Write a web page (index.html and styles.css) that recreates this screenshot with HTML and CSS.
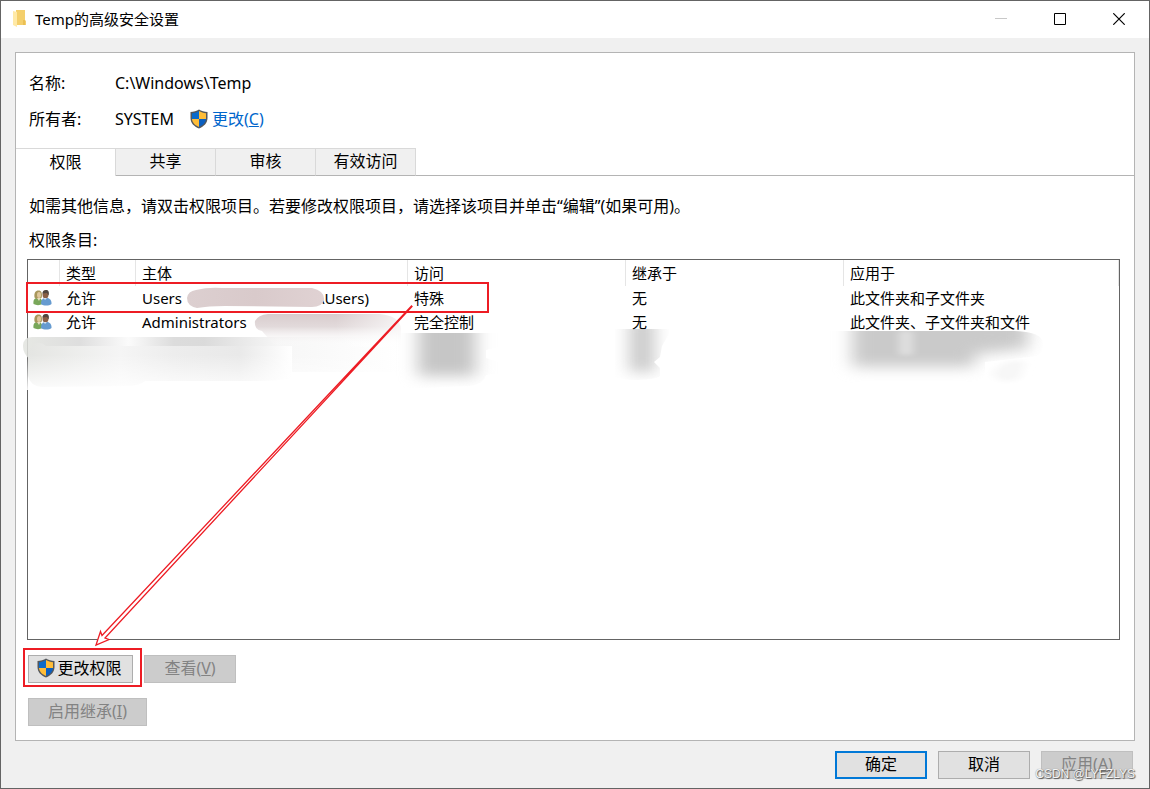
FILE: index.html
```html
<!DOCTYPE html>
<html lang="zh-CN">
  <head>
    <meta charset="UTF-8" />
    <meta name="viewport" content="width=device-width, initial-scale=1.0" />
    <title>Temp的高级安全设置</title>
    <link rel="stylesheet" href="styles.css">
  </head>
  <body>
    <!-- shared icons -->
    <svg class="defs" width="0" height="0" aria-hidden="true">
      <symbol id="shield" viewBox="0 0 18 20">
        <path d="M9 0.500C6.800 2 3.500 3 0.500 3V9C0.500 14 4 17.500 9 19.500C14 17.500 17.500 14 17.500 9V3C14.500 3 11.200 2 9 0.500Z" fill="#55585c"/>
        <path d="M9 2V10H2V4.200C4.500 4 7 3.200 9 2Z" fill="#0b6bcb"/>
        <path d="M9 2V10H16V4.200C13.500 4 11 3.200 9 2Z" fill="#ffbd38"/>
        <path d="M9 10V18C5 16.300 2.200 13.500 2 10Z" fill="#ffbd38"/>
        <path d="M9 10V18C13 16.300 15.800 13.500 16 10Z" fill="#0b5fc0"/>
      </symbol>
      <symbol id="people" viewBox="0 0 19 16">
        <path d="M0.500 14C0 10 1.500 8 4.500 7.800C8 8 9.500 10 9.500 14C7 15.500 3 15.500 0.500 14Z" fill="#79a75a"/>
        <path d="M1.500 7.500C0.800 3 2.500 0.500 5.500 0.500C8.500 0.500 9.300 3 8.800 7.500L6.500 9H3.500Z" fill="#a8975c"/>
        <ellipse cx="6" cy="5" rx="2" ry="3" fill="#dfc69c"/>
        <path d="M4 8L6 11L7.500 8Z" fill="#e6dcc0"/>
        <path d="M8 14C8 10 9.500 8 13 7.800C17 8 18.700 10.500 18.500 14C16 16 10.500 16 8 14Z" fill="#669bd0"/>
        <ellipse cx="12.500" cy="4.600" rx="3" ry="4" fill="#8a6046"/>
        <path d="M9.500 3.500C9.500 1 11 0 13 0C15.500 0 16.500 2 15.500 5.500L14 3Z" fill="#51463f"/>
        <path d="M10.500 8L12 10L14 8Z" fill="#d5e2ef"/>
      </symbol>
    </svg>

    <div class="window">
      <header class="titlebar">
        <svg class="folder" viewBox="0 0 13 17" aria-hidden="true">
          <path d="M3 0H12V10L13 11V15H3Z" fill="#f4cf6c"/>
          <path d="M0 1L4 2V17L0 15Z" fill="#ffe9a6"/>
          <path d="M10 10H12V15H10Z" fill="#eabf54"/>
        </svg>
        <h1>Temp的高级安全设置</h1>
        <div class="controls">
          <button type="button" aria-label="最小化" disabled>
            <svg viewBox="0 0 12 12"><path d="M0 5.500H12" stroke="#c8c8c8"/></svg>
          </button>
          <button type="button" aria-label="最大化">
            <svg viewBox="0 0 12 12"><path d="M0.500 0.500H11.500V11.500H0.500Z" fill="none" stroke="#000"/></svg>
          </button>
          <button type="button" aria-label="关闭">
            <svg viewBox="0 0 12 12"><path d="M0.300 0.300L11.700 11.700M11.700 0.300L0.300 11.700" stroke="#000" stroke-width="1.200"/></svg>
          </button>
        </div>
      </header>

      <main class="panel">
        <dl class="info">
          <dt>名称:</dt>
          <dd>C:\Windows\Temp</dd>
          <dt>所有者:</dt>
          <dd>
            SYSTEM
            <a href="#owner"><svg class="shield"><use href="#shield"/></svg>更改(<u>C</u>)</a>
          </dd>
        </dl>

        <nav class="tabs" role="tablist">
          <button type="button" role="tab" class="tab active" aria-selected="true">权限</button>
          <button type="button" role="tab" class="tab">共享</button>
          <button type="button" role="tab" class="tab">审核</button>
          <button type="button" role="tab" class="tab">有效访问</button>
        </nav>

        <section class="content">
          <p>如需其他信息，请双击权限项目。若要修改权限项目，请选择该项目并单击“编辑”(如果可用)。</p>
          <p id="entriesLabel">权限条目:</p>

          <div class="list">
            <table aria-labelledby="entriesLabel">
              <colgroup>
                <col class="col-icon">
                <col class="col-type">
                <col class="col-principal">
                <col class="col-access">
                <col class="col-inherit">
                <col>
              </colgroup>
              <thead>
                <tr>
                  <th></th>
                  <th>类型</th>
                  <th>主体</th>
                  <th>访问</th>
                  <th>继承于</th>
                  <th>应用于</th>
                </tr>
              </thead>
              <tbody>
                <tr>
                  <td><svg class="people"><use href="#people"/></svg></td>
                  <td>允许</td>
                  <td>Users <span class="hidden-name"></span>\Users)</td>
                  <td>特殊</td>
                  <td>无</td>
                  <td>此文件夹和子文件夹</td>
                </tr>
                <tr>
                  <td><svg class="people"><use href="#people"/></svg></td>
                  <td>允许</td>
                  <td>Administrators</td>
                  <td>完全控制</td>
                  <td>无</td>
                  <td>此文件夹、子文件夹和文件</td>
                </tr>
              </tbody>
            </table>
          </div>

          <div class="actions">
            <button type="button" class="btn change"><svg class="shield"><use href="#shield"/></svg>更改权限</button>
            <button type="button" class="btn view" disabled>查看(<u>V</u>)</button>
          </div>
          <div class="actions">
            <button type="button" class="btn inherit" disabled>启用继承(<u>I</u>)</button>
          </div>
        </section>
      </main>

      <footer class="footer">
        <button type="button" class="btn default">确定</button>
        <button type="button" class="btn">取消</button>
        <button type="button" class="btn" disabled>应用(<u>A</u>)</button>
      </footer>

      <!-- masked names, red boxes and arrow drawn over the dialog -->
      <svg class="marks" viewBox="0 0 1150 789" aria-hidden="true">
        <defs>
          <linearGradient id="pink">
            <stop offset="0" stop-color="#dccfd0"/>
            <stop offset="0.500" stop-color="#d9cacb"/>
            <stop offset="1" stop-color="#e0d2d3"/>
          </linearGradient>
          <linearGradient id="pinkFade" x2="0" y2="1">
            <stop offset="0" stop-color="#d8cccd"/>
            <stop offset="0.400" stop-color="#e2dadb"/>
            <stop offset="1" stop-color="#fff" stop-opacity="0"/>
          </linearGradient>
          <linearGradient id="pinkEnd">
            <stop offset="0.550" stop-color="#fff" stop-opacity="0"/>
            <stop offset="1" stop-color="#fff" stop-opacity="0.750"/>
          </linearGradient>
          <linearGradient id="strip">
            <stop offset="0" stop-color="#e2e4df"/>
            <stop offset="0.150" stop-color="#d8d8d8"/>
            <stop offset="0.280" stop-color="#fafafa"/>
            <stop offset="0.400" stop-color="#d6d6d6"/>
            <stop offset="0.480" stop-color="#d4d4d4"/>
            <stop offset="0.680" stop-color="#f5f5f5"/>
            <stop offset="1" stop-color="#fff"/>
          </linearGradient>
          <linearGradient id="greyLeft">
            <stop offset="0" stop-color="#e4e5e2"/>
            <stop offset="0.350" stop-color="#f5f5f5"/>
            <stop offset="0.550" stop-color="#ededed"/>
            <stop offset="0.800" stop-color="#e9e9e9"/>
            <stop offset="1" stop-color="#fff"/>
          </linearGradient>
          <linearGradient id="down" x2="0" y2="1">
            <stop offset="0.200" stop-color="#fff" stop-opacity="0"/>
            <stop offset="1" stop-color="#fff" stop-opacity="0.900"/>
          </linearGradient>
          <filter id="blur" x="-60%" y="-60%" width="220%" height="220%" color-interpolation-filters="sRGB"><feGaussianBlur stdDeviation="9 7"/></filter>
          <filter id="soft" x="-60%" y="-60%" width="220%" height="220%"><feGaussianBlur stdDeviation="5 2"/></filter>
          <clipPath id="clipAccess"><path d="M390 333H500V347L486 350V358L498 362V374L486 375Q484 384 470 386L440 387Q420 389 390 388Z"/></clipPath>
          <clipPath id="clipInherit"><path d="M600 329H672L662 346L660 357L654 362L660 368V376Q655 380 630 380L600 374Z"/></clipPath>
          <clipPath id="clipApply"><path d="M815 331H1015Q1042 332 1043 343Q1043 354 1037 356L985 362V372Q984 383 960 383L845 384L815 376Z"/></clipPath>
        </defs>

        <path d="M32 337H400V372H50Q22 360 23 345Q24 337 32 337Z" fill="url(#strip)" opacity="0.850"/>
        <path d="M28 352Q36 337 46 346H292V378Q280 381 250 381H145Q140 386 125 386L42 387Q30 386 28 376Z" fill="url(#greyLeft)"/>
        <path d="M23 346H402V390H23Z" fill="url(#down)"/>

        <path d="M196 290Q208 287 222 288L312 288Q325 291 324 300Q322 307 312 307L225 306Q208 306 197 308Q187 306 187 298Q188 291 196 290Z" fill="url(#pink)"/>
        <path d="M268 314H380Q400 316 401 329V346H275L262 331Q254 330 255 321Q258 315 268 314Z" fill="url(#pinkFade)"/>
        <path d="M255 313H402V347H255Z" fill="url(#pinkEnd)"/>

        <g clip-path="url(#clipAccess)"><rect x="418" y="318" width="58" height="58" fill="#c6c6c6" filter="url(#blur)"/></g>
        <g clip-path="url(#clipInherit)"><rect x="630" y="318" width="24" height="54" fill="#c8c8c8" filter="url(#blur)"/></g>
        <g clip-path="url(#clipApply)">
          <path d="M852 318H1028V349L975 354V367H852Z" fill="#cacaca" filter="url(#blur)"/>
          <rect x="899" y="331" width="14" height="24" fill="#fff" opacity="0.400" filter="url(#soft)"/>
        </g>
        <path d="M992 374Q1004 356 1026 362L1020 378Q1000 386 992 374Z" fill="#f7f7f7" filter="url(#soft)"/>

        <g fill="none" stroke="#ed1c24" stroke-width="2">
          <rect x="27" y="283" width="461" height="29"/>
          <rect x="24" y="649" width="117" height="37"/>
        </g>
        <path d="M411.500 306L102 635.500L100.500 631.500L96 645L109 639.500L105 638L412 306.500Z" fill="#fff" stroke="#ed1c24" stroke-width="1.300"/>
      </svg>
      <span class="watermark">CSDN @LYFZLYS</span>
    </div>
  </body>
</html>
```
FILE: styles.css
```css
* {
  box-sizing: border-box;
}
body {
  margin: 0;
  font-family: "Noto Sans", "Noto Sans CJK SC", sans-serif;
  font-size: 16px;
  color: #000;
}
button {
  font: inherit;
  color: inherit;
}
.defs {
  position: absolute;
}
.window {
  position: relative;
  display: flex;
  flex-direction: column;
  min-height: 100vh;
  border: 1px solid #646464;
  background: #f0f0f0;
  overflow: hidden;
}

/* title bar */
.titlebar {
  display: flex;
  align-items: center;
  height: 37px;
  padding: 0 1px 2px 12px;
  background: #fff;
}
.folder {
  width: 13px;
  height: 17px;
}
.titlebar h1 {
  flex: 1;
  margin: 0 0 0 9px;
  font-size: 15px;
  font-weight: normal;
  line-height: 24px;
}
.controls {
  display: flex;
}
.controls button {
  display: flex;
  align-items: center;
  justify-content: center;
  width: 59px;
  height: 35px;
  padding: 0;
  border: none;
  background: none;
}
.controls svg {
  width: 12px;
  height: 12px;
}

/* main panel */
.panel {
  flex: 1;
  display: flex;
  flex-direction: column;
  margin: 14px 14px 0;
  border: 1px solid #b4b4b4;
  background: #fff;
}
.info {
  display: grid;
  grid-template-columns: 86px 1fr;
  margin: 12px 13px 11px;
  line-height: 36px;
}
.info dd {
  display: flex;
  align-items: center;
  margin: 0;
}
.info a {
  display: flex;
  align-items: center;
  margin-left: 16px;
  color: #0066cc;
  text-decoration: none;
}
.shield {
  width: 18px;
  height: 20px;
}
.info .shield {
  margin-right: 4px;
}

.tabs {
  display: flex;
  height: 28px;
}
.tabs::after {
  content: "";
  flex: 1;
  border-bottom: 1px solid #b4b4b4;
}
.tab {
  width: 100px;
  padding: 0 0 2px;
  border: 1px solid #d9d9d9;
  border-width: 1px 1px 1px 0;
  border-bottom-color: #b4b4b4;
  background: #f0f0f0;
  line-height: 24px;
}
.tab.active {
  border-bottom: none;
  background: #fff;
}

.content {
  flex: 1;
  display: flex;
  flex-direction: column;
  padding: 13px 14px 14px 11px;
}
.content p {
  margin: 0 0 0 2px;
  line-height: 34px;
}

/* permission entries */
.list {
  flex: 1;
  margin-top: 2px;
  border: 1px solid #646464;
  font-size: 15px;
}
table {
  width: 100%;
  table-layout: fixed;
  border-collapse: separate;
  border-spacing: 0;
}
.col-icon {
  width: 32px;
}
.col-type {
  width: 76px;
}
.col-principal {
  width: 272px;
}
.col-access,
.col-inherit {
  width: 218px;
}
th,
td {
  height: 24px;
  padding: 0 0 0 6px;
  font-weight: normal;
  line-height: 24px;
  text-align: left;
  white-space: nowrap;
}
th {
  height: 26px;
  border-right: 1px solid #e5e5e5;
}
td:first-child {
  padding-left: 5px;
}
.people {
  display: block;
  width: 19px;
  height: 16px;
}
.hidden-name {
  display: inline-block;
  width: 133px;
}

/* buttons */
.actions {
  display: flex;
  gap: 11px;
  margin: 15px 0 0 1px;
}
.btn {
  display: flex;
  align-items: center;
  justify-content: center;
  width: 92px;
  height: 28px;
  padding: 0 0 2px;
  border: 1px solid #adadad;
  background: #e1e1e1;
  line-height: 24px;
}
.btn:disabled {
  border-color: #bfbfbf;
  background: #ccc;
  color: #838383;
}
.btn.default {
  border: 2px solid #0078d7;
}
.change {
  gap: 2px;
  width: 105px;
  padding-right: 2px;
}
.inherit {
  width: 119px;
}
.footer {
  display: flex;
  justify-content: flex-end;
  gap: 11px;
  padding: 10px 16px 9px;
}

/* overlays */
.marks {
  position: absolute;
  top: -1px;
  left: -1px;
  width: 1150px;
  height: 789px;
  pointer-events: none;
}
.watermark {
  position: absolute;
  right: 14px;
  bottom: 6px;
  font-family: "Liberation Sans", Arial, sans-serif;
  font-size: 12px;
  line-height: 16px;
  color: #f4f4f4;
  text-shadow: 1px 1px 1px #555, 0 0 1px #777;
}
```
